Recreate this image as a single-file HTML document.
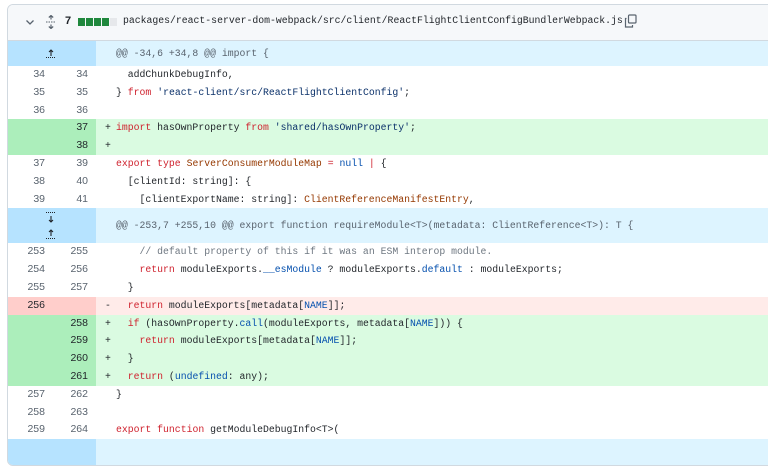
<!DOCTYPE html><html><head><style>
html,body{margin:0;width:768px;height:442px;overflow:hidden;background:#fff;font-family:"Liberation Mono",monospace;}
.box{position:absolute;left:7px;top:4px;width:800px;height:460px;border:1px solid #d1d9e0;border-radius:6px;overflow:hidden;}
.hdr{position:absolute;left:0;top:0;width:100%;height:35px;background:#f6f8fa;border-bottom:1px solid #d1d9e0;}
.row{position:absolute;left:0;width:100%;height:17.8px;font-size:9.8px;line-height:17.8px;color:#1f2328;white-space:pre;}
.n1,.n2{position:absolute;top:0;height:100%;width:44px;text-align:right;color:#59636e;font-family:"Liberation Sans",sans-serif;font-size:10.5px;box-sizing:border-box;}
.n1{left:0;padding-right:7px}.n2{left:44px;padding-right:8px}
.c{position:absolute;left:88px;top:0;height:100%;right:0}
.s{position:absolute;left:9px;top:0}
.t{position:absolute;left:20px;top:0}
.add .n1,.add .n2{background:#aceebb;color:#1f2328}.add .c{background:#dafbe1}
.del .n1,.del .n2{background:#ffcecb;color:#1f2328}.del .c{background:#ffebe9}
.hunk{position:absolute;left:0;width:100%;font-size:9.8px;color:#59636e;white-space:pre}
.hunk .g{position:absolute;left:0;top:0;width:88px;height:100%;background:#b6e3ff}
.hunk .c{background:#ddf4ff}
.k{color:#cf222e}.st{color:#0a3069}.b{color:#0550ae}.o{color:#953800}.cm{color:#6e7781}
</style></head><body>
<div class="box">
<div class="hdr">
<svg style="position:absolute;left:17px;top:12px" width="10" height="10" viewBox="0 0 10 10"><path d="M1.5 3.5L5 7l3.5-3.5" fill="none" stroke="#59636e" stroke-width="1.3"/></svg>
<svg style="position:absolute;left:37px;top:10px" width="12" height="14" viewBox="0 0 12 14"><path d="M6 0.5v4M3.8 2.5L6 0.5 8.2 2.5M6 13.5v-4M3.8 11.5L6 13.5 8.2 11.5" fill="none" stroke="#59636e" stroke-width="1.2"/><path d="M1 7h10" stroke="#59636e" stroke-width="1" stroke-dasharray="1.5 1"/></svg>
<span style="position:absolute;left:57px;top:10px;font-family:'Liberation Sans',sans-serif;font-size:11px;font-weight:bold;color:#1f2328">7</span>
<span style="position:absolute;left:70px;top:13px;width:40px;height:8px">
<i style="position:absolute;left:0;width:7px;height:8px;background:#1f883d"></i><i style="position:absolute;left:8px;width:7px;height:8px;background:#1f883d"></i><i style="position:absolute;left:16px;width:7px;height:8px;background:#1f883d"></i><i style="position:absolute;left:24px;width:7px;height:8px;background:#1f883d"></i><i style="position:absolute;left:32px;width:7px;height:8px;background:#e6e8eb"></i></span>
<span style="position:absolute;left:115px;top:10px;font-size:9.8px;color:#1f2328">packages/react-server-dom-webpack/src/client/ReactFlightClientConfigBundlerWebpack.js</span>
<svg style="position:absolute;left:616px;top:9px" width="13" height="14" viewBox="0 0 13 14"><rect x="4.5" y="1" width="7.5" height="8" rx="1" fill="none" stroke="#59636e" stroke-width="1.2"/><path d="M2.5 4.5H1.5v8.5h7V11" fill="none" stroke="#59636e" stroke-width="1.2"/></svg>
</div>

<div class="hunk" style="top:36px;height:25px;line-height:25px"><div class="g"><svg style="position:absolute;left:37px;top:7px" width="12" height="11" viewBox="0 0 12 11"><path d="M6 8V2M4 4L6 2 8 4" fill="none" stroke="#1f2328" stroke-width="1.1"/><path d="M1 9.5h10" stroke="#1f2328" stroke-dasharray="1 1"/></svg></div><div class="c"><span class="t">@@ -34,6 +34,8 @@ import {</span></div></div>

<div class="row" style="top:61px"><span class="n1">34</span><span class="n2">34</span><div class="c"><span class="t">  addChunkDebugInfo,</span></div></div>
<div class="row" style="top:78.8px"><span class="n1">35</span><span class="n2">35</span><div class="c"><span class="t">} <span class="k">from</span> <span class="st">'react-client/src/ReactFlightClientConfig'</span>;</span></div></div>
<div class="row" style="top:96.6px"><span class="n1">36</span><span class="n2">36</span><div class="c"></div></div>
<div class="row add" style="top:114.4px"><span class="n1"></span><span class="n2">37</span><div class="c"><span class="s">+</span><span class="t"><span class="k">import</span> hasOwnProperty <span class="k">from</span> <span class="st">'shared/hasOwnProperty'</span>;</span></div></div>
<div class="row add" style="top:132.2px"><span class="n1"></span><span class="n2">38</span><div class="c"><span class="s">+</span></div></div>
<div class="row" style="top:150px"><span class="n1">37</span><span class="n2">39</span><div class="c"><span class="t"><span class="k">export</span> <span class="k">type</span> <span class="o">ServerConsumerModuleMap</span> <span class="k">=</span> <span class="b">null</span> <span class="k">|</span> {</span></div></div>
<div class="row" style="top:167.8px"><span class="n1">38</span><span class="n2">40</span><div class="c"><span class="t">  [clientId: string]: {</span></div></div>
<div class="row" style="top:185.6px"><span class="n1">39</span><span class="n2">41</span><div class="c"><span class="t">    [clientExportName: string]: <span class="o">ClientReferenceManifestEntry</span>,</span></div></div>

<div class="hunk" style="top:203.4px;height:35px;line-height:35px"><div class="g"><svg style="position:absolute;left:37px;top:3px" width="12" height="29" viewBox="0 0 12 29"><path d="M1 1.5h10M1 27.5h10" stroke="#1f2328" stroke-dasharray="1 1"/><path d="M6 5v6M4 9L6 11 8 9M6 25v-6M4 21L6 19 8 21" fill="none" stroke="#1f2328" stroke-width="1.1"/></svg></div><div class="c"><span class="t">@@ -253,7 +255,10 @@ export function requireModule&lt;T&gt;(metadata: ClientReference&lt;T&gt;): T {</span></div></div>

<div class="row" style="top:238.4px"><span class="n1">253</span><span class="n2">255</span><div class="c"><span class="t">    <span class="cm">// default property of this if it was an ESM interop module.</span></span></div></div>
<div class="row" style="top:256.2px"><span class="n1">254</span><span class="n2">256</span><div class="c"><span class="t">    <span class="k">return</span> moduleExports.<span class="b">__esModule</span> ? moduleExports.<span class="b">default</span> : moduleExports;</span></div></div>
<div class="row" style="top:274px"><span class="n1">255</span><span class="n2">257</span><div class="c"><span class="t">  }</span></div></div>
<div class="row del" style="top:291.8px"><span class="n1">256</span><span class="n2"></span><div class="c"><span class="s">-</span><span class="t">  <span class="k">return</span> moduleExports[metadata[<span class="b">NAME</span>]];</span></div></div>
<div class="row add" style="top:309.6px"><span class="n1"></span><span class="n2">258</span><div class="c"><span class="s">+</span><span class="t">  <span class="k">if</span> (hasOwnProperty.<span class="b">call</span>(moduleExports, metadata[<span class="b">NAME</span>])) {</span></div></div>
<div class="row add" style="top:327.4px"><span class="n1"></span><span class="n2">259</span><div class="c"><span class="s">+</span><span class="t">    <span class="k">return</span> moduleExports[metadata[<span class="b">NAME</span>]];</span></div></div>
<div class="row add" style="top:345.2px"><span class="n1"></span><span class="n2">260</span><div class="c"><span class="s">+</span><span class="t">  }</span></div></div>
<div class="row add" style="top:363px"><span class="n1"></span><span class="n2">261</span><div class="c"><span class="s">+</span><span class="t">  <span class="k">return</span> (<span class="b">undefined</span>: any);</span></div></div>
<div class="row" style="top:380.8px"><span class="n1">257</span><span class="n2">262</span><div class="c"><span class="t">}</span></div></div>
<div class="row" style="top:398.6px"><span class="n1">258</span><span class="n2">263</span><div class="c"></div></div>
<div class="row" style="top:416.4px"><span class="n1">259</span><span class="n2">264</span><div class="c"><span class="t"><span class="k">export</span> <span class="k">function</span> getModuleDebugInfo&lt;T&gt;(</span></div></div>
<div class="hunk" style="top:434.2px;height:30px"><div class="g"></div><div class="c"></div></div>
</div>
</body></html>
